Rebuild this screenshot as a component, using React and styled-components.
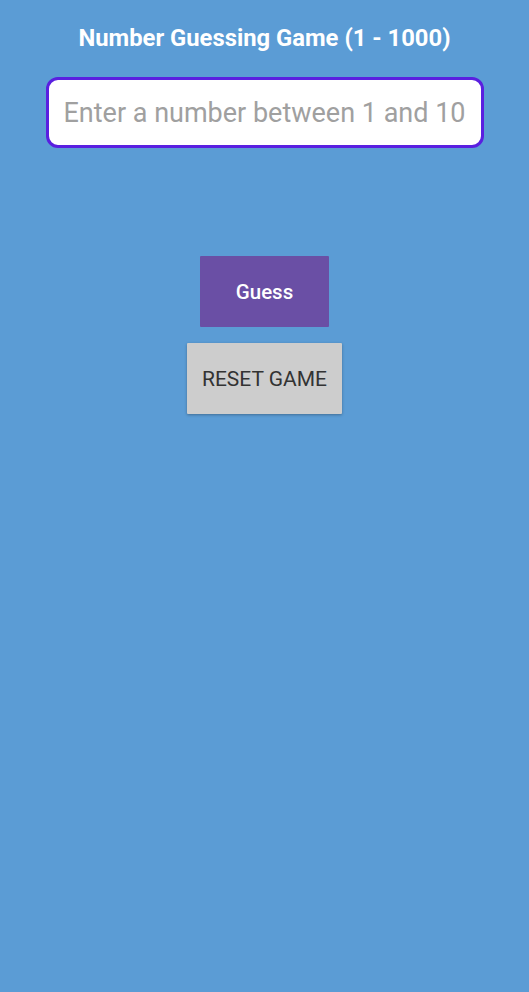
import React, { useState } from "react";
import styled, { createGlobalStyle } from "styled-components";

const GlobalStyle = createGlobalStyle`
  html, body {
    margin: 0;
    padding: 0;
    background: #5b9cd5;
  }
  * {
    box-sizing: border-box;
  }
`;

const Screen = styled.div`
  width: 529px;
  min-height: 992px;
  background: #5b9cd5;
  font-family: Roboto, "Liberation Sans", sans-serif;
  display: flex;
  flex-direction: column;
  align-items: center;
  padding-top: 24px;
`;

const Title = styled.h1`
  margin: 0;
  color: #ffffff;
  font-size: 23.8px;
  font-weight: 700;
  line-height: 28px;
`;

const NumberInput = styled.input`
  margin-top: 25px;
  width: 438px;
  height: 71px;
  border: 3px solid #5a1fe0;
  border-radius: 12px;
  background: #ffffff;
  padding: 0 15px;
  font-family: Roboto, "Liberation Sans", sans-serif;
  font-size: 27px;
  color: #333;
  outline: none;

  &::placeholder {
    color: #a0a0a0;
  }
`;

const Actions = styled.div`
  margin-top: 108px;
  display: flex;
  flex-direction: column;
  align-items: center;
  gap: 16px;
`;

const ActionButton = styled.button`
  height: 71px;
  padding: 0 ${(p) => p.$padX}px;
  border: none;
  border-radius: 1px;
  background: ${(p) => p.$bg};
  color: ${(p) => p.$fg};
  font-family: Roboto, "Liberation Sans", sans-serif;
  font-size: ${(p) => p.$size}px;
  font-weight: ${(p) => (p.$strong ? 500 : 400)};
  box-shadow: ${(p) => (p.$raised ? "0 1px 3px rgba(0,0,0,0.3)" : "none")};
  cursor: pointer;
`;

export default function App() {
  const [value, setValue] = useState("");

  return (
    <>
      <GlobalStyle />
      <Screen>
        <Title>Number Guessing Game (1 - 1000)</Title>
        <NumberInput
          type="text"
          value={value}
          onChange={(e) => setValue(e.target.value)}
          placeholder="Enter a number between 1 and 1000"
        />
        <Actions>
          <ActionButton $bg="#6a4fa5" $fg="#ffffff" $padX={36} $size={20.5} $strong>
            Guess
          </ActionButton>
          <ActionButton $bg="#cdcdcd" $fg="#333333" $padX={15} $size={21} $raised>
            RESET GAME
          </ActionButton>
        </Actions>
      </Screen>
    </>
  );
}
